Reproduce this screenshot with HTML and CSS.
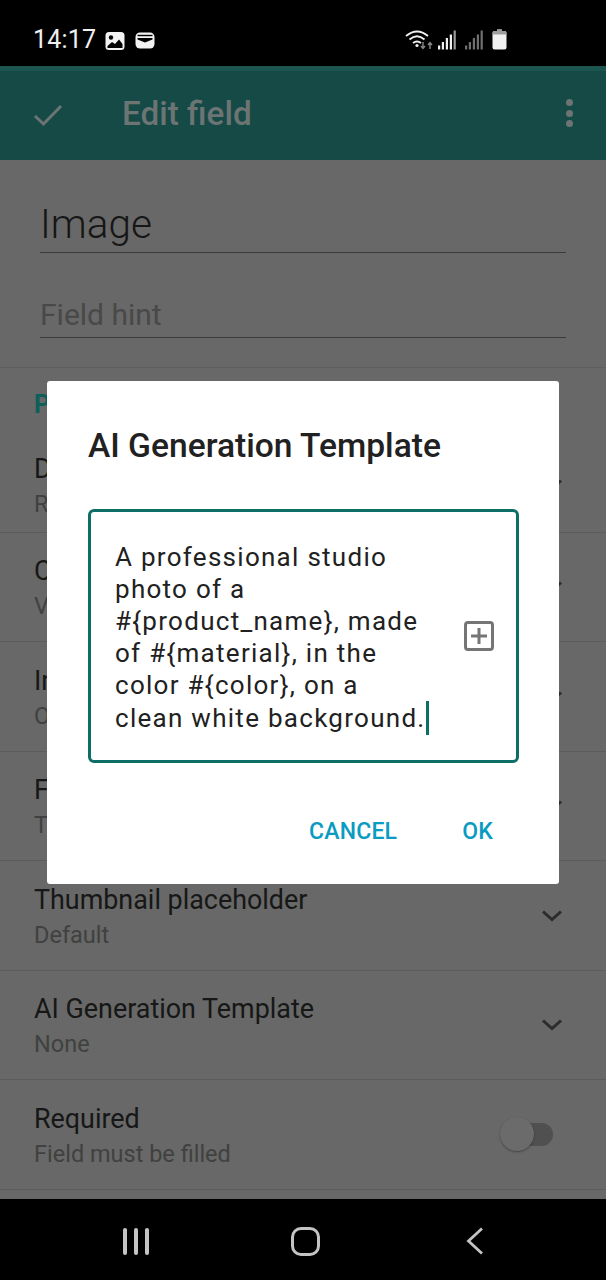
FILE: index.html
```html
<!DOCTYPE html>
<html lang="en">
<head>
<meta charset="utf-8">
<title>Edit field</title>
<link rel="stylesheet" href="styles.css">
</head>
<body>
<div class="screen">
  <header class="status">
    <div class="status-left">
      <span class="clock">14:17</span>
      <svg class="ic-pic" viewBox="0 0 20 20"><rect x="0.5" y="1" width="19" height="18" rx="3.5" fill="#f2f2f2"/><circle cx="6" cy="6.5" r="2.2" fill="#000"/><path d="M2.5 17 V15 L7 11 L10 13 L14 8.5 L17.5 13 V17 Z" fill="#000"/></svg>
      <svg class="ic-wallet" viewBox="0 0 20 17"><rect x="0.5" y="0.5" width="19" height="16" rx="4.5" fill="#f2f2f2"/><path d="M2.5 3.500 H17.500" stroke="#000" stroke-width="1.400"/><path d="M2.500 6 H17.500 V7.500 L10 10.500 L2.500 7.500 Z" fill="#000"/></svg>
    </div>
    <div class="status-right">
      <svg class="ic-wifi" viewBox="0 0 28 20"><g fill="none" stroke="#f0f0f0" stroke-width="1.800"><path d="M1 6 Q12 -3 23 6"/><path d="M4.500 9.500 Q12 3 19.500 9.500"/><path d="M8 13 Q12 10 16 13"/></g><circle cx="12" cy="15.500" r="1.600" fill="#f0f0f0"/><path d="M18 12 V18.500 M16 16 L18 18.500 L20 16" stroke="#888" stroke-width="1.400" fill="none"/><path d="M25 19 V12.500 M23 15 L25 12.500 L27 15" stroke="#888" stroke-width="1.400" fill="none"/></svg>
      <svg class="ic-bars" viewBox="0 0 18 20"><g fill="#f0f0f0"><rect x="0" y="15.500" width="2.200" height="4"/><rect x="3.800" y="12" width="2.200" height="7.500"/><rect x="7.800" y="8" width="2.200" height="11.500"/><rect x="11.800" y="4.500" width="2.200" height="15"/></g><rect x="15.600" y="0.500" width="2.200" height="19" fill="#9a9a9a"/></svg>
      <svg class="ic-bars dim" viewBox="0 0 18 20"><g fill="#6f6f6f"><rect x="0" y="15.500" width="2.200" height="4"/><rect x="3.800" y="12" width="2.200" height="7.500"/><rect x="7.800" y="8" width="2.200" height="11.500"/><rect x="11.800" y="4.500" width="2.200" height="15"/><rect x="15.600" y="0.500" width="2.200" height="19"/></g></svg>
      <svg class="ic-batt" viewBox="0 0 15 21"><path d="M5 0.500 H10 V2 H12.500 Q14.500 2 14.500 4 V18.500 Q14.500 20.500 12.500 20.500 H2.500 Q0.500 20.500 0.500 18.500 V4 Q0.500 2 2.500 2 H5 Z" fill="#f0f0f0"/><path d="M0.500 5.500 V4 Q0.500 2 2.500 2 H5 V0.500 H10 V2 H12.500 Q14.500 2 14.500 4 V5.500 Z" fill="#9d9d9d"/></svg>
    </div>
  </header>

  <div class="toolbar">
    <svg class="ic-check" viewBox="0 0 30 24"><path d="M2 13 L10.500 21 L28 3" fill="none" stroke="#6c7474" stroke-width="3"/></svg>
    <h1 class="toolbar-title">Edit field</h1>
    <div class="more"><i></i><i></i><i></i></div>
  </div>

  <main class="content">
    <section class="fields">
      <div class="field field-name">Image</div>
      <div class="field field-hint">Field hint</div>
    </section>
    <h2 class="section-head">Properties</h2>
    <div class="row row-first"><div><div class="row-title">Display mode</div><div class="row-sub">Regular</div></div><svg class="chev" viewBox="0 0 20 12"><path d="M1 2 L10 10 L19 2" /></svg></div>
    <div class="row"><div><div class="row-title">Crop mode</div><div class="row-sub">Visible area</div></div><svg class="chev" viewBox="0 0 20 12"><path d="M1 2 L10 10 L19 2" /></svg></div>
    <div class="row"><div><div class="row-title">Image quality</div><div class="row-sub">Original</div></div><svg class="chev" viewBox="0 0 20 12"><path d="M1 2 L10 10 L19 2" /></svg></div>
    <div class="row"><div><div class="row-title">Format</div><div class="row-sub">Thumbnail</div></div><svg class="chev" viewBox="0 0 20 12"><path d="M1 2 L10 10 L19 2" /></svg></div>
    <div class="row"><div><div class="row-title">Thumbnail placeholder</div><div class="row-sub">Default</div></div><svg class="chev" viewBox="0 0 20 12"><path d="M1 2 L10 10 L19 2" /></svg></div>
    <div class="row"><div><div class="row-title">AI Generation Template</div><div class="row-sub">None</div></div><svg class="chev" viewBox="0 0 20 12"><path d="M1 2 L10 10 L19 2" /></svg></div>
    <div class="row"><div><div class="row-title">Required</div><div class="row-sub">Field must be filled</div></div><div class="switch"><span class="knob"></span></div></div>
    <div class="row"></div>
  </main>

  <nav class="navbar">
    <div class="nav-recent"><i></i><i></i><i></i></div>
    <div class="nav-home"></div>
    <svg class="nav-back" viewBox="0 0 18 28"><path d="M16 1.500 L2.500 14 L16 26.500" fill="none" stroke="#c4c4c4" stroke-width="2.800"/></svg>
  </nav>

  <div class="dialog">
    <h2 class="dialog-title">AI Generation Template</h2>
    <div class="template">
      <p class="template-text">A professional studio<br>photo of a<br>#{product_name}, made<br>of #{material}, in the<br>color #{color}, on a<br>clean white background.<span class="caret"></span></p>
      <svg class="ic-add" viewBox="0 0 30 30"><rect x="1.500" y="1.500" width="27" height="27" rx="2.500" fill="none" stroke="#757575" stroke-width="3"/><path d="M15 7 V23 M7 15 H23" stroke="#757575" stroke-width="3"/></svg>
    </div>
    <div class="actions">
      <span class="btn">CANCEL</span>
      <span class="btn">OK</span>
    </div>
  </div>
</div>
</body>
</html>
```
FILE: styles.css
```css
* { box-sizing: border-box; }
html, body { margin: 0; padding: 0; }
body { font-family: Roboto, "Liberation Sans", sans-serif; background: #000; }
.screen { position: relative; width: 606px; height: 1280px; overflow: hidden; display: flex; flex-direction: column; background: #676867; }

.status { height: 66px; flex: none; background: #000; display: flex; justify-content: space-between; align-items: center; padding: 13px 99px 0 33px; }
.status-left { display: flex; align-items: center; }
.clock { color: #f0f0f0; font-size: 25px; line-height: 28px; letter-spacing: 0.2px; width: 72px; margin-top: 1px; }
.ic-pic { width: 20px; height: 20px; margin-top: 2px; }
.ic-wallet { width: 20px; height: 17px; margin-left: 10px; margin-top: 2px; }
.status-right { display: flex; align-items: center; }
.ic-wifi { width: 28px; height: 20px; }
.ic-bars { width: 18px; height: 20px; margin-left: 5px; }
.ic-bars.dim { margin-left: 9px; }
.ic-batt { width: 15px; height: 21px; margin-left: 9px; }

.toolbar { height: 94px; flex: none; background: #164a46; border-top: 5px solid #1c544f; display: flex; align-items: center; padding: 0 33px; }
.ic-check { width: 30px; height: 24px; flex: none; margin-top: -1px; }
.toolbar-title { margin: -3px 0 0 59px; flex: 1; font-size: 33.300px; font-weight: 500; color: #6c7474; line-height: 36px; }
.more { display: flex; flex-direction: column; gap: 3.300px; margin-top: -5px; }
.more i { display: block; width: 7px; height: 7px; border-radius: 50%; background: #6c7474; }

.content { flex: 1; min-height: 0; overflow: hidden; }
.fields { height: 208px; padding: 38px 40px 0; border-bottom: 1px solid #5e5f5e; }
.field { border-bottom: 1px solid #3a3b3a; }
.field-name { font-size: 40.500px; font-weight: 300; line-height: 52px; color: #151615; height: 55px; }
.field-hint { margin-top: 46px; font-size: 30px; line-height: 32px; color: #484948; height: 39px; }
.section-head { margin: 0; padding: 21px 34px 0; height: 70px; font-size: 25px; line-height: 32px; font-weight: 700; color: #0d5f5a; }
.row { height: 109.500px; padding: 5px 44px 0 34px; border-top: 1px solid #5b5c5b; display: flex; align-items: center; justify-content: space-between; flex: none; }
.row-first { height: 93.500px; border-top: 0; }
.row-title { font-size: 26.900px; line-height: 34px; color: #161716; }
.row-sub { font-size: 23.500px; line-height: 36px; color: #404140; }
.chev { width: 20px; height: 13px; flex: none; margin-top: -5px; }
.chev path { fill: none; stroke: #2b2c2b; stroke-width: 3; }

.switch { position: relative; width: 50px; height: 23px; border-radius: 12px; background: #4f504f; margin: -5px 9px 0 0; flex: none; }
.knob { position: absolute; left: -3px; top: -5.500px; width: 34px; height: 34px; border-radius: 50%; background: #6a6b6a; box-shadow: 0 1px 2px rgba(0,0,0,.35); }

.navbar { height: 81px; flex: none; background: #000; display: flex; align-items: center; }
.nav-recent { display: flex; gap: 7px; margin-left: 123px; margin-top: 3px; }
.nav-recent i { display: block; width: 4px; height: 27px; border-radius: 2px; background: #c4c4c4; }
.nav-home { width: 29px; height: 29px; border: 3px solid #c4c4c4; border-radius: 10px; margin-left: 142px; margin-top: 3px; }
.nav-back { width: 18px; height: 28px; margin-left: 146px; margin-top: 3px; }

.dialog { position: absolute; left: 47px; top: 381px; width: 512px; height: 503px; background: #fff; border-radius: 3px; padding: 41px; }
.dialog-title { margin: 0; font-size: 33.600px; line-height: 48px; font-weight: 500; color: #212121; }
.template { margin-top: 39px; width: 431px; height: 254px; border: 3px solid #0b6f65; border-radius: 6px; padding: 29px 0 0 24px; position: relative; display: flex; }
.template-text { margin: 0; font-size: 26px; line-height: 32px; letter-spacing: 1.280px; color: #212121; white-space: nowrap; }
.caret { display: inline-block; width: 3.500px; height: 34px; background: #0b6f65; vertical-align: -8px; margin-left: 0; }
.ic-add { position: absolute; right: 22px; top: 109px; width: 30px; height: 30px; }
.actions { display: flex; justify-content: flex-end; gap: 65px; margin-top: 54px; padding-right: 25px; }
.btn { font-size: 23px; line-height: 30px; font-weight: 500; color: #0a9bc2; letter-spacing: 0.200px; }
```
